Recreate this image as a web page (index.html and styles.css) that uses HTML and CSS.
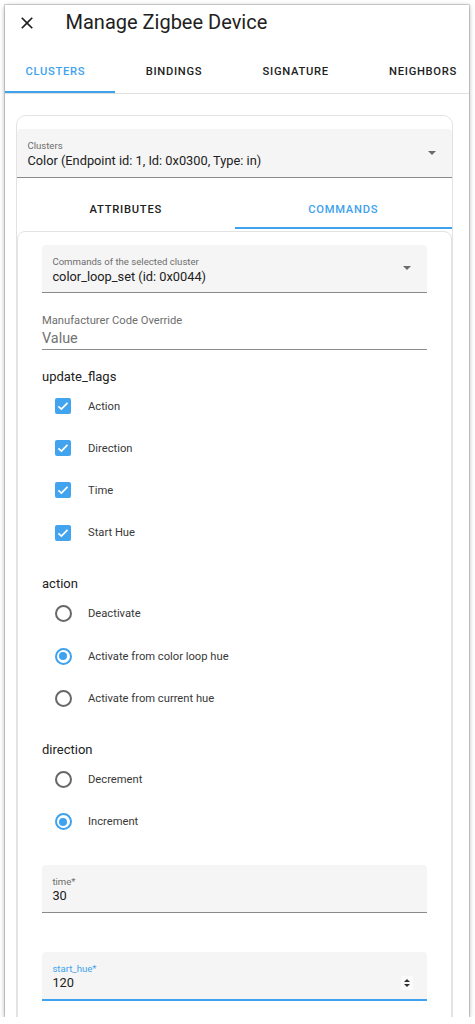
FILE: index.html
```html
<!DOCTYPE html>
<html lang="en">
<head>
<meta charset="utf-8">
<title>Manage Zigbee Device</title>
<link rel="stylesheet" href="styles.css">
</head>
<body>
<div class="window">
  <header class="header">
    <svg class="close" viewBox="0 0 24 24" aria-hidden="true"><path d="M19 6.41L17.59 5 12 10.59 6.41 5 5 6.41 10.59 12 5 17.59 6.41 19 12 13.41 17.59 19 19 17.59 13.41 12z"/></svg>
    <h1 class="title">Manage Zigbee Device</h1>
  </header>
  <nav class="tabs">
    <div class="tab active">Clusters</div>
    <div class="tab">Bindings</div>
    <div class="tab">Signature</div>
    <div class="tab">Neighbors</div>
  </nav>
  <section class="card">
    <div class="select">
      <div class="field-text">
        <div class="field-label">Clusters</div>
        <div class="field-value">Color (Endpoint id: 1, Id: 0x0300, Type: in)</div>
      </div>
      <span class="arrow"></span>
    </div>
    <div class="subtabs">
      <div class="subtab">Attributes</div>
      <div class="subtab active">Commands</div>
    </div>
    <div class="inner-card">
      <div class="select select-cmd">
        <div class="field-text">
          <div class="field-label">Commands of the selected cluster</div>
          <div class="field-value">color_loop_set (id: 0x0044)</div>
        </div>
        <span class="arrow"></span>
      </div>

      <div class="mfr">
        <div class="mfr-label">Manufacturer Code Override</div>
        <div class="mfr-value">Value</div>
      </div>

      <div class="group group-first">
        <div class="group-title">update_flags</div>
        <div class="options">
          <div class="option"><span class="control"><span class="checkbox"><svg viewBox="0 0 16 16"><path d="M3.4 8.3l3 2.8 6.1-6.3"/></svg></span></span><span class="opt-label">Action</span></div>
          <div class="option"><span class="control"><span class="checkbox"><svg viewBox="0 0 16 16"><path d="M3.4 8.3l3 2.8 6.1-6.3"/></svg></span></span><span class="opt-label">Direction</span></div>
          <div class="option"><span class="control"><span class="checkbox"><svg viewBox="0 0 16 16"><path d="M3.4 8.3l3 2.8 6.1-6.3"/></svg></span></span><span class="opt-label">Time</span></div>
          <div class="option"><span class="control"><span class="checkbox"><svg viewBox="0 0 16 16"><path d="M3.4 8.3l3 2.8 6.1-6.3"/></svg></span></span><span class="opt-label">Start Hue</span></div>
        </div>
      </div>

      <div class="group">
        <div class="group-title">action</div>
        <div class="options options-radio">
          <div class="option"><span class="control"><span class="radio"></span></span><span class="opt-label">Deactivate</span></div>
          <div class="option"><span class="control"><span class="radio checked"></span></span><span class="opt-label">Activate from color loop hue</span></div>
          <div class="option"><span class="control"><span class="radio"></span></span><span class="opt-label">Activate from current hue</span></div>
        </div>
      </div>

      <div class="group">
        <div class="group-title">direction</div>
        <div class="options options-radio">
          <div class="option"><span class="control"><span class="radio"></span></span><span class="opt-label">Decrement</span></div>
          <div class="option"><span class="control"><span class="radio checked"></span></span><span class="opt-label">Increment</span></div>
        </div>
      </div>

      <div class="textfield textfield-time">
        <div class="field-text">
          <div class="field-label">time*</div>
          <div class="field-value">30</div>
        </div>
      </div>

      <div class="textfield textfield-hue focused">
        <div class="field-text">
          <div class="field-label">start_hue*</div>
          <div class="field-value">120</div>
        </div>
        <span class="spinner"><span class="spin-up"></span><span class="spin-down"></span></span>
      </div>
    </div>
  </section>
</div>
</body>
</html>
```

FILE: styles.css
```css
* { box-sizing: border-box; }

html, body {
  margin: 0;
  padding: 0;
  background: #ffffff;
}

body {
  font-family: Roboto, "Liberation Sans", Arial, sans-serif;
  color: #212121;
}

.window {
  margin: 5px 0 0 5px;
  width: 464px;
  height: 1012px;
  overflow: hidden;
  background: #ffffff;
  box-shadow: 0 0 0 1px rgba(0, 0, 0, 0.14), 0 1px 5px rgba(0, 0, 0, 0.35);
}

/* header */
.header {
  height: 34px;
  display: flex;
  align-items: center;
}

.close {
  width: 20px;
  height: 20px;
  margin: 2px 0 0 12px;
  fill: #212121;
  flex: none;
}

.title {
  margin: 0 0 0 28.5px;
  font-size: 20px;
  font-weight: 400;
  line-height: 34px;
  color: #212121;
}

/* main tabs */
.tabs {
  display: flex;
  margin: 11px 0 0 -10.5px;
  border-bottom: 1px solid #e0e0e0;
}

.tab {
  flex: none;
  height: 43px;
  padding: 2px 30.2px 0;
  border-bottom: 2px solid transparent;
  display: flex;
  align-items: center;
  font-size: 11.2px;
  font-weight: 500;
  letter-spacing: 0.7px;
  text-transform: uppercase;
  color: #212121;
  white-space: nowrap;
}

.tab:first-child {
  padding-left: 31px;
}

.tab.active {
  color: #3ea2ee;
  border-bottom-color: #3ea2ee;
}

/* outer card */
.card {
  margin: 21px 16px 0 11px;
  border: 1px solid #e3e3e3;
  border-radius: 10px;
  padding-top: 13px;
}

/* select / text fields */
.select,
.textfield {
  height: 49px;
  background: #f5f5f5;
  border-bottom: 1px solid #8a8a8a;
  border-radius: 4px 4px 0 0;
  display: flex;
  align-items: center;
  justify-content: space-between;
  padding: 0 16px 0 10.4px;
}

.field-text {
  align-self: flex-start;
  padding-top: 11px;
  min-width: 0;
}

.field-label {
  font-size: 9.6px;
  line-height: 12px;
  color: #6e6e6e;
  white-space: nowrap;
}

.field-value {
  margin-top: 1px;
  font-size: 12.8px;
  line-height: 16px;
  color: #212121;
  white-space: nowrap;
}

.arrow {
  flex: none;
  width: 0;
  height: 0;
  border-left: 4.2px solid transparent;
  border-right: 4.2px solid transparent;
  border-top: 4.4px solid #6b6b6b;
}

/* sub tabs */
.subtabs {
  display: flex;
}

.subtab {
  flex: 1;
  height: 51px;
  padding-top: 13px;
  border-bottom: 2px solid transparent;
  display: flex;
  align-items: center;
  justify-content: center;
  font-size: 11.2px;
  font-weight: 500;
  letter-spacing: 0.75px;
  text-transform: uppercase;
  color: #212121;
}

.subtab.active {
  color: #3ea2ee;
  border-bottom-color: #3ea2ee;
}

/* inner card */
.inner-card {
  margin-top: 1.5px;
  border: 1px solid #e3e3e3;
  border-radius: 8px;
  padding: 13px 24px 60px;
}

.select-cmd {
  height: 48px;
  padding-right: 16px;
}

/* manufacturer code override */
.mfr {
  margin-top: 21px;
}

.mfr-label {
  font-size: 11.2px;
  line-height: 14px;
  color: #6e6e6e;
}

.mfr-value {
  margin-top: 1px;
  font-size: 14.4px;
  line-height: 19px;
  padding-bottom: 1px;
  color: #727272;
  border-bottom: 1px solid #8c8c8c;
}

/* option groups */
.group {
  margin-top: 22.6px;
}

.group-first {
  margin-top: 19.5px;
}

.group-title {
  font-size: 13px;
  line-height: 16px;
  color: #212121;
}

.options-radio {
  margin-top: 0.7px;
}

.option {
  height: 42.17px;
  display: flex;
  align-items: center;
}

.control {
  flex: none;
  width: 18px;
  height: 18px;
  margin-left: 12px;
  display: flex;
  align-items: center;
  justify-content: center;
}

.checkbox {
  width: 16px;
  height: 16px;
  border-radius: 2px;
  background: #42a4ef;
  display: flex;
}

.checkbox svg {
  width: 16px;
  height: 16px;
  fill: none;
  stroke: #ffffff;
  stroke-width: 1.7;
}

.radio {
  width: 17px;
  height: 17px;
  border-radius: 50%;
  border: 2px solid #686868;
  display: flex;
  align-items: center;
  justify-content: center;
}

.radio.checked {
  border-color: #3ea2ee;
}

.radio.checked::after {
  content: "";
  width: 8px;
  height: 8px;
  border-radius: 50%;
  background: #3ea2ee;
}

.opt-label {
  margin-left: 16px;
  font-size: 11.2px;
  color: #383838;
}

/* text fields */
.textfield-time {
  margin-top: 21.7px;
  height: 48px;
}

.textfield-time .field-value,
.textfield-hue .field-value {
  margin-top: 0;
}

.textfield-hue {
  margin-top: 39.3px;
  height: 48.7px;
  border-bottom: 2px solid #3ea2ee;
  padding-right: 14px;
}

.textfield-hue .field-label {
  color: #3ea2ee;
}

.spinner {
  flex: none;
  width: 12px;
  height: 14px;
  background: #fbfbfb;
  display: flex;
  flex-direction: column;
  align-items: center;
  justify-content: center;
  gap: 2px;
  align-self: flex-end;
  margin-bottom: 9px;
}

.spin-up {
  width: 0;
  height: 0;
  border-left: 3px solid transparent;
  border-right: 3px solid transparent;
  border-bottom: 3.5px solid #333333;
}

.spin-down {
  width: 0;
  height: 0;
  border-left: 3px solid transparent;
  border-right: 3px solid transparent;
  border-top: 3.5px solid #333333;
}
```
